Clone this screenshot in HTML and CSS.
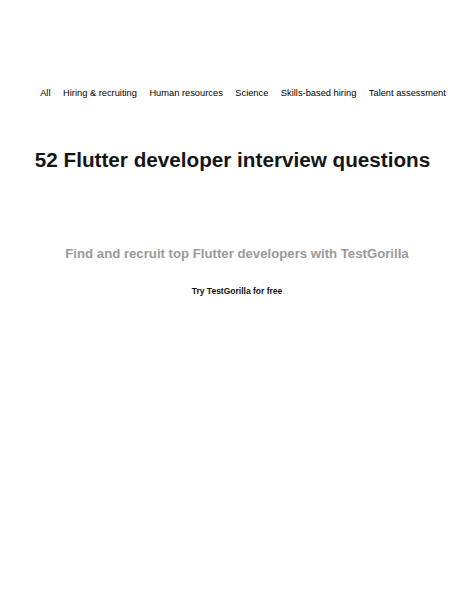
FILE: index.html
```html
<!DOCTYPE html>
<html>
<head>
<meta charset="utf-8">
<link rel="stylesheet" href="styles.css">
</head>
<body>
<nav class="cats">
  <span class="cat">All</span>
  <span class="cat">Hiring &amp; recruiting</span>
  <span class="cat">Human resources</span>
  <span class="cat">Science</span>
  <span class="cat">Skills-based hiring</span>
  <span class="cat">Talent assessment</span>
</nav>
<h1 class="title">52 Flutter developer interview questions</h1>
<p class="sub">Find and recruit top Flutter developers with TestGorilla</p>
<p class="cta">Try TestGorilla for free</p>
</body>
</html>
```
FILE: styles.css
```css
html, body { margin: 0; padding: 0; background: #fff; }
body { font-family: "Liberation Sans", Arial, sans-serif; color: #111; width: 474px; }
.cats { display: flex; justify-content: center; gap: 12.5px; padding: 88px 0 0 12px; font-size: 9.3px; }
.cat { color: #000; }
.title { margin: 50px 0 0; padding-right: 9px; text-align: center; font-size: 20.7px; font-weight: bold; color: #151515; }
.sub { margin: 74px 0 0; text-align: center; font-size: 13.2px; font-weight: bold; color: #9a9a9a; }
.cta { margin: 25px 0 0; text-align: center; font-size: 8.5px; font-weight: bold; }
```
